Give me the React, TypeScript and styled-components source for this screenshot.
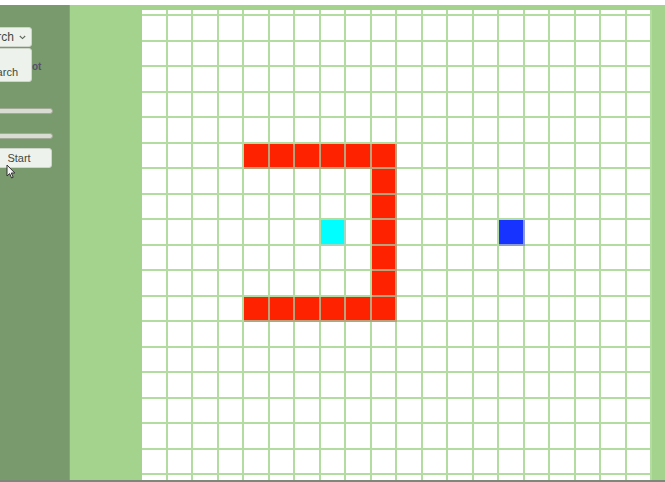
import React from 'react';
import styled, { createGlobalStyle } from 'styled-components';

const COLS = 20;
const ROWS = 20;

type Kind = 'empty' | 'wall' | 'start' | 'end';

const GlobalStyle = createGlobalStyle`
  html, body {
    margin: 0;
    padding: 0;
    background: #ffffff;
    overflow: hidden;
    font-family: "Liberation Sans", Arial, sans-serif;
  }
`;

const Page = styled.div`
  padding-top: 5px;
  height: 482px;
  box-sizing: border-box;
`;

const Main = styled.main`
  display: flex;
  height: 477px;
  box-sizing: border-box;
  border-bottom: 2px solid #7d877a;
`;

const Sidebar = styled.aside`
  position: relative;
  width: 69px;
  flex-shrink: 0;
  overflow: hidden;
  background: #789a6c;
  border-right: 1px solid #86a77a;
`;

const Controls = styled.div`
  display: flex;
  flex-direction: column;
  align-items: flex-start;
  margin-left: -60px;
  padding-top: 22px;
`;

const SelectBox = styled.div`
  display: flex;
  align-items: center;
  justify-content: flex-end;
  gap: 5px;
  width: 92px;
  height: 20px;
  box-sizing: border-box;
  padding-right: 5px;
  background: #eef2ec;
  border: 1px solid #cdd4c8;
  border-radius: 3px;
  font-size: 12px;
  color: #3f4a3f;
  white-space: nowrap;
  overflow: hidden;
`;

const Row = styled.div`
  display: flex;
  align-items: center;
  margin-top: 1px;
`;

const Button = styled.button<{ $width: number; $height: number; $offset?: number; $top?: number; $align?: string }>`
  width: ${({ $width }) => $width}px;
  height: ${({ $height }) => $height}px;
  margin: ${({ $top = 0 }) => $top}px 0 0 ${({ $offset = 0 }) => $offset}px;
  padding: ${({ $align }) => ($align === 'right' ? '13px 13px 0 0' : '0')};
  box-sizing: border-box;
  text-align: ${({ $align = 'center' }) => $align};
  background: #eef2ec;
  border: 1px solid #cdd4c8;
  border-radius: 3px;
  font-family: "Liberation Sans", Arial, sans-serif;
  font-size: 11px;
  color: #3f4a3f;
  white-space: nowrap;
`;

const Hint = styled.span`
  font-size: 10px;
  font-weight: bold;
  color: #55506a;
  margin-top: 3px;
`;

const Track = styled.div<{ $top: number }>`
  width: 113px;
  height: 6px;
  margin-top: ${({ $top }) => $top}px;
  box-sizing: border-box;
  background: #d9dcd3;
  border: 1px solid #a2a996;
  border-radius: 3px;
`;

const Cursor = styled.svg`
  position: absolute;
  left: 6px;
  top: 159px;
`;

const Board = styled.section`
  flex: 1;
  background: #a3d38c;
  padding: 5px 13px 0 72px;
`;

const Viewport = styled.div`
  width: 510px;
  height: 470px;
  overflow: hidden;
  background: #ffffff;
`;

const Grid = styled.div`
  display: grid;
  grid-template-columns: repeat(${COLS}, 25.5px);
  grid-auto-rows: 25.5px;
  margin-top: -19.5px;
`;

const fills: Record<Kind, [string, string]> = {
  empty: ['#ffffff', '#b3dca0'],
  wall: ['#ff2200', '#b9a27c'],
  start: ['#00ffff', '#a2d8c0'],
  end: ['#1733ff', '#8c9bd2'],
};

const Cell = styled.div<{ $kind: Kind }>`
  box-sizing: border-box;
  background: ${({ $kind }) => fills[$kind][0]};
  border-right: 2px solid ${({ $kind }) => fills[$kind][1]};
  border-bottom: 2px solid ${({ $kind }) => fills[$kind][1]};
`;

function kindAt(r: number, c: number): Kind {
  if (r === 9 && c === 7) return 'start';
  if (r === 9 && c === 14) return 'end';
  if ((r === 6 || r === 12) && c >= 4 && c <= 9) return 'wall';
  if (c === 9 && r > 6 && r < 12) return 'wall';
  return 'empty';
}

export default function App() {
  const cells = [];
  for (let r = 0; r < ROWS; r++) {
    for (let c = 0; c < COLS; c++) {
      cells.push(<Cell key={`${r}-${c}`} $kind={kindAt(r, c)} />);
    }
  }

  return (
    <Page>
      <GlobalStyle />
      <Main>
        <Sidebar>
          <Controls>
            <SelectBox>
              <span>A* Search</span>
              <svg width="7" height="5" viewBox="0 0 7 5">
                <path d="M0.8 1 L3.5 3.6 L6.2 1" fill="none" stroke="#5d665a" strokeWidth="1.1" />
              </svg>
            </SelectBox>
            <Row>
              <Button $width={92} $height={34} $align="right">Search</Button>
              <Hint>ot</Hint>
            </Row>
            <Track $top={26} />
            <Track $top={19} />
            <Button $width={66} $height={20} $offset={46} $top={9}>Start</Button>
          </Controls>
          <Cursor width="10" height="15" viewBox="0 0 10 15">
            <path d="M1 1 L1 12 L3.6 9.6 L5.6 14 L7.2 13.3 L5.3 9 L8.8 9 Z" fill="#f4f4f4" stroke="#333" strokeWidth="1" />
          </Cursor>
        </Sidebar>
        <Board>
          <Viewport>
            <Grid>{cells}</Grid>
          </Viewport>
        </Board>
      </Main>
    </Page>
  );
}
